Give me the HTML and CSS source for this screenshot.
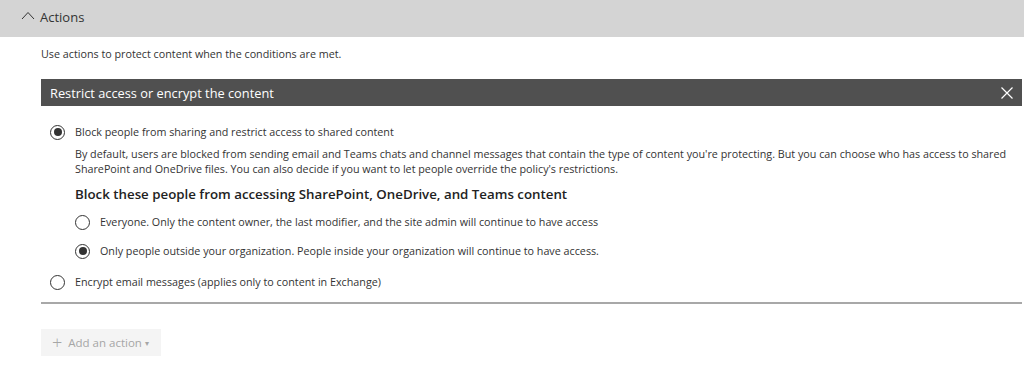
FILE: index.html
```html
<!DOCTYPE html>
<html>
<head>
<meta charset="utf-8">
<link rel="stylesheet" href="styles.css">
</head>
<body>
<div class="section-header">
  <svg class="chevron" width="14" height="9" viewBox="0 0 14 9"><path d="M1 8 L7 1.5 L13 8" fill="none" stroke="#333" stroke-width="1"/></svg>
  <span class="section-title">Actions</span>
</div>
<div class="content">
  <p class="intro">Use actions to protect content when the conditions are met.</p>
  <div class="action-bar">
    <span class="action-title">Restrict access or encrypt the content</span>
    <svg class="close" width="12" height="12" viewBox="0 0 12 12"><path d="M0.5 0.5 L11.5 11.5 M11.5 0.5 L0.5 11.5" stroke="#fff" stroke-width="1.2"/></svg>
  </div>
  <div class="options">
    <div class="option">
      <span class="radio checked"></span>
      <span class="label">Block people from sharing and restrict access to shared content</span>
    </div>
    <div class="indent">
      <p class="desc">By default, users are blocked from sending email and Teams chats and channel messages that contain the type of content you're protecting. But you can choose who has access to shared SharePoint and OneDrive files. You can also decide if you want to let people override the policy's restrictions.</p>
      <h3 class="subhead">Block these people from accessing SharePoint, OneDrive, and Teams content</h3>
      <div class="sub-options">
        <div class="option">
          <span class="radio"></span>
          <span class="label">Everyone. Only the content owner, the last modifier, and the site admin will continue to have access</span>
        </div>
        <div class="option">
          <span class="radio checked"></span>
          <span class="label">Only people outside your organization. People inside your organization will continue to have access.</span>
        </div>
      </div>
    </div>
    <div class="option">
      <span class="radio"></span>
      <span class="label">Encrypt email messages (applies only to content in Exchange)</span>
    </div>
  </div>
  <div class="divider"></div>
  <button class="add-btn"><span class="plus">+</span><span class="btn-text">Add an action</span><span class="caret">&#9662;</span></button>
</div>
</body>
</html>
```
FILE: styles.css
```css
* { box-sizing: border-box; }
body {
  margin: 0;
  font-family: "Open Sans", "Noto Sans", sans-serif;
  color: #333;
  background: #fff;
}
.section-header {
  height: 37px;
  background: #d4d4d4;
  display: flex;
  align-items: center;
  padding-left: 21px;
  padding-bottom: 3px;
}
.chevron { margin-right: 5px; margin-top: -3px; }
.section-title { font-size: 13px; color: #333; }
.content { padding: 0 2px 0 41px; }
.intro {
  margin: 9px 0 0;
  font-size: 10.75px;
  line-height: 16px;
}
.action-bar {
  margin-top: 17px;
  height: 27px;
  background: #505050;
  display: flex;
  align-items: center;
  justify-content: space-between;
  padding: 0 9px;
}
.action-title { color: #fff; font-size: 12.8px; }
.options { padding-top: 18px; padding-left: 9px; }
.option {
  display: flex;
  align-items: center;
  height: 16px;
  font-size: 10.75px;
}
.radio {
  width: 15px;
  height: 15px;
  border: 1px solid #333;
  border-radius: 50%;
  margin-right: 10px;
  position: relative;
  flex: none;
}
.radio.checked::after {
  content: "";
  position: absolute;
  left: 2.5px; top: 2.5px;
  width: 8px; height: 8px;
  border-radius: 50%;
  background: #333;
}
.indent { padding-left: 25px; }
.desc {
  margin: 7px 0 0;
  font-size: 10.75px;
  line-height: 15px;
}
.subhead {
  margin: 8px 0 0;
  font-size: 13.3px;
  font-weight: 600;
  color: #222;
  line-height: 19px;
}
.sub-options { display: flex; flex-direction: column; gap: 13px; margin-top: 10px; margin-bottom: 15px; }
.divider {
  margin-top: 12px;
  height: 2px;
  background: #a8a8a8;
}
.add-btn {
  margin-top: 25px;
  width: 120px;
  height: 27px;
  background: #f4f4f4;
  border: none;
  font-family: inherit;
  font-size: 11.5px;
  color: #a6a6a6;
  padding: 0 0 0 11px;
  display: flex;
  align-items: center;
}
.plus { font-size: 18px; font-weight: 300; margin-right: 6px; margin-top: -2px; }
.caret { font-size: 8px; margin-left: 3px; }
```
